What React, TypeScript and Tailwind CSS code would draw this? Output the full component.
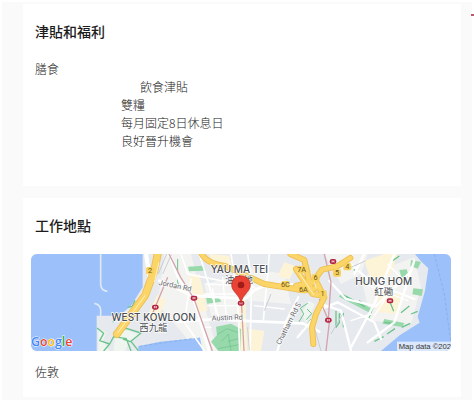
import type { ReactNode } from "react"

const benefits = ["雙糧", "每月固定8日休息日", "良好晉升機會"]

const routeBadges = [
  { label: "2", x: 357, y: 50 },
  { label: "7A", x: 812, y: 46 },
  { label: "6C", x: 763, y: 92 },
  { label: "6A", x: 817, y: 106 },
  { label: "6", x: 854, y: 72 },
  { label: "5", x: 918, y: 57 },
  { label: "4", x: 949, y: 38 },
  { label: "1", x: 875, y: 120 },
]

const stations = [
  [373, 159],
  [489, 132],
  [630, 147],
  [906, 22],
  [1077, 140],
  [892, 198],
]

function Card({ title, children }: { title: string; children: ReactNode }) {
  return (
    <section className="bg-white pt-[17px]">
      <h2 className="px-3 text-[14px] leading-5 font-medium text-[#1c1c1c]">{title}</h2>
      {children}
    </section>
  )
}

function LocationMap() {
  return (
    <svg
      viewBox="0 0 1260 291"
      preserveAspectRatio="xMidYMid slice"
      role="img"
      aria-label="佐敦"
      className="block h-[97px] w-full rounded-md font-['Roboto','Noto_Sans_CJK_TC',sans-serif]"
    >
      <rect width="1260" height="291" fill="#e6e9ed" />

      {/* built-up blocks */}
      <g fill="#f3f3f1">
        <path d="M400 0h80l30 120 50 171h-60L380 150z" />
        <path d="M520 90l90-20 30 110-100 5zM640 40l120 20 20 90-130-10z" />
        <path d="M880 0h130l-20 60-60 30zM990 70l160-60 20 90-30 110-120-10z" />
      </g>
      <g fill="#fdf4d8">
        <path d="M470 70l35-10 25 110-30 5zM535 0l60 5 10 50-60-10zM618 100h24l6 190h-22z" />
        <path d="M1000 20l60-20h40l-20 60-60 20zM1040 115l70 5-10 60-60-5zM650 225l50 5-10 61h-40z" />
        <path d="M760 25l35 12-20 40-35-12zM345 195l35-75 25 20-25 55z" />
      </g>

      {/* harbour */}
      <g fill="#9cc0f9">
        <path d="M0 0h335v100l-35 55-35 30h-68v106H0z" />
        <path d="M322 277l65-14 120-12 8 40H322z" />
        <path d="M1152 0l18 22 22 21-10 67-22 78 6 18-60 38-56 47h210V0z" />
      </g>
      <g fill="none" stroke="#dfe8f5" strokeWidth="5">
        <path d="M209 0v92q2 18 20 20M190 148q18 4 19 20v18" />
      </g>
      <path d="M1210 0l30 120 20 150M325 277l180-26" fill="none" stroke="#7da9e8" strokeWidth="2" strokeDasharray="9 6" />

      {/* parks */}
      <g fill="#98d9ab">
        <path d="M555 218l45-9 30 16-2 66h-66l-22-28 18-20z" />
        <path d="M471 38l47-3 4 15-48 2zM525 128l36-3 10 18-42 6z" />
        <path d="M1105 48l22-2 8 24-24-1zM1147 103l29 3-4 20-28-5zM1140 18l30 6-10 20-22-8z" />
        <path d="M930 118l90 44-4 14-92-48zM1060 195l60 12-6 12-60-10z" />
      </g>
      <g fill="#eef6ef">
        <path d="M202 225l24 10-10 24 20 32h-34zM252 240l34-12 38 14-28 20-14 29h-34z" />
        <path d="M812 180l20-40 20 10-26 60z" />
      </g>
      <g fill="none" stroke="#6cc38b" strokeWidth="4" strokeLinejoin="round">
        <path d="M198 222l20 16-12 22 30 10 12-22 38 6 14 37M236 270l-18 21M248 235l38-12 44 14-32 26-22-8M300 262l22 28M246 205l8-18M290 160l14-3 8-18" />
        <path d="M558 242l30-18 34 12M572 262l20-22 8 50M590 262l34-8M560 284l64-12" strokeWidth="2" />
        <path d="M915 170v50l10-14v-26l12-2v42M932 120l70 38M1000 150l-16-10M1012 195l14-34M1060 205l30 4M1088 172l-12-30M1110 176l25-20M1030 262l28-14M1068 240l24-16M1112 220l26-12M1140 180l20-8M1085 20l20-14M968 48h16" />
        <path d="M800 210l18-30-10-18 22-14M818 225l22-30M828 165l14 14-16 18M440 15v70l10 22" strokeWidth="3" />
      </g>

      {/* streets */}
      <g fill="none" stroke="#fff" strokeLinecap="round">
        <path d="M345 0l12 80-40 80-60 85" strokeWidth="12" />
        <path d="M415 0l28 75 42 50 50 170M385 80l100 45 135 8h25l26-25 43-18 85 2M440 204l100-8 275 12 50 25" strokeWidth="8" />
        <path d="M450 0l20 60 200 40M505 0l60 195M600 0l20 130 6 160M650 0l12 90-5 200M715 0l-18 200M480 75l-20 130 60 85" strokeWidth="5" />
        <path d="M802 130l-38 75-25 86M800 250l70-85 50-20 110 60 20 50M870 150l60 20 30 120M895 80l50 55 90 22 105-105M960 30l60 55 130 50M1000 0l-30 60M1090 0l-60 150-70 130M1150 20l-60 185-80 60" strokeWidth="7" />
        <path d="M520 120h120M525 90l100 5M530 155h100M545 105l10 75M575 70l10 110M670 155l90 10M540 220h-25l20 60M1000 90l130 50M1020 200l60-90M960 200l60-20M1070 30l60 60" strokeWidth="4" />
      </g>
      <g fill="none" stroke="#c9ced6" strokeWidth="3">
        <path d="M382 60l25-60M395 60l26-58M650 220l5 70M700 170l20-50M850 220l20 71M935 180l-35 60M825 20l55 120M1005 20l-45 20" />
      </g>
      <g fill="none" stroke="#d3a3ab" strokeWidth="4">
        <path d="M414 0l35 70 40 64 55 157M631 140l8 151M880 0l20 85-8 110M865 135l30 70-10 86M360 190l50-120" />
      </g>

      {/* expressways */}
      <g fill="none" strokeLinejoin="round" strokeLinecap="round">
        <path d="M380 0l-10 50-28 75-84 115" stroke="#edbd50" strokeWidth="24" />
        <g stroke="#edbd50" strokeWidth="18">
          <path d="M512 0q18 30 70 36l118 54 95 15q35 10 65-5" />
          <path d="M778 0l42 18 18 80M795 45l50 75 32 5M958 12l-40 25-45 10-30 40-48 8M860 90l20 40-25 50-12 40 4 50" />
        </g>
        <path d="M380 0l-10 50-28 75-84 115" stroke="#fbd568" strokeWidth="19" />
        <g stroke="#fbd568" strokeWidth="13">
          <path d="M512 0q18 30 70 36l118 54 95 15q35 10 65-5" />
          <path d="M778 0l42 18 18 80M795 45l50 75 32 5M958 12l-40 25-45 10-30 40-48 8M860 90l20 40-25 50-12 40 4 50" />
        </g>
        <path d="M342 125l-82 112M384 25l-14 60M800 50l48 72M837 40l18 60" stroke="#fff1c0" strokeWidth="3" />
      </g>

      {routeBadges.map(({ label, x, y }) => (
        <g key={label}>
          <rect x={x - 12} y={y - 11} width="24" height="22" rx="5" fill="#f8d25c" />
          <text x={x} y={y + 7} textAnchor="middle" fontSize="22" fill="#6b5420">
            {label}
          </text>
        </g>
      ))}

      {stations.map(([x, y]) => (
        <g key={`${x}-${y}`}>
          <rect x={x - 10} y={y - 7} width="20" height="15" rx="7" fill="#b3213e" />
          <path d={`M${x - 3} ${y - 3}v7M${x + 3} ${y - 3}v7M${x - 3} ${y}h6`} stroke="#fff" strokeWidth="2" />
        </g>
      ))}

      <g fill="#5f6368" stroke="#fff" strokeWidth="4" paintOrder="stroke" strokeLinejoin="round" fontSize="22">
        <text x="382" y="92" transform="rotate(12 382 92)">Jordan Rd</text>
        <text x="542" y="200" transform="rotate(-2 542 200)">Austin Rd</text>
        <text x="748" y="274" transform="rotate(-63 748 274)">Chatham Rd S</text>
      </g>
      <g
        fill="#4a4d52"
        stroke="#fff"
        strokeWidth="4"
        paintOrder="stroke"
        strokeLinejoin="round"
        textAnchor="middle"
        fontSize="30"
        fontWeight="500"
        className="font-['Inter','Noto_Sans_CJK_TC',sans-serif]"
      >
        <text x="368" y="200">WEST KOWLOON</text>
        <text x="625" y="57">YAU MA TEI</text>
        <text x="1058" y="92">HUNG HOM</text>
        <g fontSize="28" fontWeight="400">
          <text x="367" y="231">西九龍</text>
          <text x="624" y="87">油麻地</text>
          <text x="1058" y="124">紅磡</text>
        </g>
      </g>

      {/* marker */}
      <path
        d="M630 148c-3-26-28-34-28-55a28 28 0 0 1 56 0c0 21-25 29-28 55z"
        fill="#ea4335"
        stroke="#b5271d"
        strokeWidth="2"
      />
      <circle cx="630" cy="93" r="10" fill="#9f1c17" />

      <text
        x="0"
        y="277"
        fontSize="37"
        fontWeight="600"
        stroke="#fff"
        strokeWidth="3"
        paintOrder="stroke"
        strokeLinejoin="round"
        className="font-['Open_Sans',sans-serif]"
      >
        <tspan fill="#4285f4">G</tspan>
        <tspan fill="#ea4335">o</tspan>
        <tspan fill="#fbbc05">o</tspan>
        <tspan fill="#4285f4">g</tspan>
        <tspan fill="#34a853">l</tspan>
        <tspan fill="#ea4335">e</tspan>
      </text>
      <rect x="1098" y="263" width="162" height="28" fill="#dce8fb" />
      <text x="1103" y="285" fontSize="23" fill="#333" className="font-['Liberation_Sans',sans-serif]">
        Map data ©202
      </text>
    </svg>
  )
}

export default function App() {
  return (
    <div className="relative bg-white p-0.5 font-['Noto_Sans_CJK_TC',sans-serif]">
      <span className="absolute top-3.5 right-0 h-0.5 w-[3px] bg-[#c0566e]" />
      <main className="flex flex-col gap-3 bg-[#fafafa] pt-0.5 pr-[11px] pb-[3px] pl-[21px]">
        <div className="bg-white pb-9">
          <Card title="津貼和福利">
            <div className="px-3 pt-[19px] text-[12px] leading-[18px] font-light text-[#222]">
              <p>膳食</p>
              <p className="pl-[105px]">飲食津貼</p>
              <ul className="pl-[86px]">
                {benefits.map((item) => (
                  <li key={item}>{item}</li>
                ))}
              </ul>
            </div>
          </Card>
        </div>
        <div className="bg-white pb-4">
          <Card title="工作地點">
            <div className="pt-[19px] pr-2.5 pl-2">
              <LocationMap />
            </div>
            <p className="px-3 pt-3 text-[12px] leading-[18px] font-light text-[#222]">佐敦</p>
          </Card>
        </div>
      </main>
    </div>
  )
}
